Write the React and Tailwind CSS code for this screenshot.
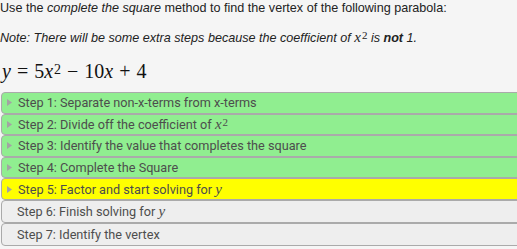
import React from "react";

const serif = { fontFamily: "'Liberation Serif', 'DejaVu Serif', serif" };

const Tri = () => (
  <svg className="w-[5px] h-[7px] mr-[6px] shrink-0" viewBox="0 0 5 7">
    <path d="M0 0 L5 3.5 L0 7 Z" fill="#a3a3a3" />
  </svg>
);

const M = ({ children }) => (
  <span className="italic text-[15px] leading-none" style={serif}>
    {children}
  </span>
);

const Sq = () => (
  <sup className="not-italic text-[11px] leading-none relative -top-[3px] ml-[1px]" style={serif}>
    2
  </sup>
);

const steps = [
  { label: "Step 1: Separate non-x-terms from x-terms", bg: "bg-[#90ee90]", open: true },
  {
    label: (
      <>
        Step 2: Divide off the coefficient of <M>x</M>
        <Sq />
      </>
    ),
    bg: "bg-[#90ee90]",
    open: true,
  },
  { label: "Step 3: Identify the value that completes the square", bg: "bg-[#90ee90]", open: true },
  { label: "Step 4: Complete the Square", bg: "bg-[#90ee90]", open: true },
  {
    label: (
      <>
        Step 5: Factor and start solving for <M>y</M>
      </>
    ),
    bg: "bg-[#ffff00]",
    open: true,
  },
  {
    label: (
      <>
        Step 6: Finish solving for <M>y</M>
      </>
    ),
    bg: "bg-[#eeeeee]",
    open: false,
  },
  { label: "Step 7: Identify the vertex", bg: "bg-[#eeeeee]", open: false },
];

export default function App() {
  return (
    <div
      className="w-[517px] h-[249px] overflow-hidden bg-[#f5f5f5] text-[12.6px] text-[#222]"
      style={{ fontFamily: "'Liberation Sans', Arial, sans-serif" }}
    >
      <p className="leading-[15px] pt-[1px]">
        Use the <i>complete the square</i> method to find the vertex of the following parabola:
      </p>
      <p className="leading-[15px] mt-[14px] italic">
        Note: There will be some extra steps because the coefficient of <M>x</M>
        <Sq /> is <b>not</b> 1.
      </p>
      <div className="mt-[13px] ml-[2px] text-[20px] leading-[24px] text-[#111]" style={serif}>
        <i>y</i>
        <span className="mx-[6px]">=</span>
        5<i>x</i>
        <sup className="text-[14px] relative -top-[4px] ml-[1px]">2</sup>
        <span className="mx-[6px]">−</span>
        10<i>x</i>
        <span className="mx-[6px]">+</span>4
      </div>
      <div
        className="mt-[9px] ml-[1px] mr-[-10px] text-[12.7px] text-[#4d4d4d]"
        style={{ fontFamily: "Roboto, 'Liberation Sans', sans-serif" }}
      >
        {steps.map((s, i) => (
          <div
            key={i}
            className={`${s.bg} flex items-center border border-[#aaaaaa] rounded-l-[4px] ${
              s.open ? "h-[21.6px] pl-[5px]" : "h-[23px] pl-[15px]"
            }`}
          >
            {s.open && <Tri />}
            <span className="whitespace-nowrap">{s.label}</span>
          </div>
        ))}
      </div>
    </div>
  );
}
